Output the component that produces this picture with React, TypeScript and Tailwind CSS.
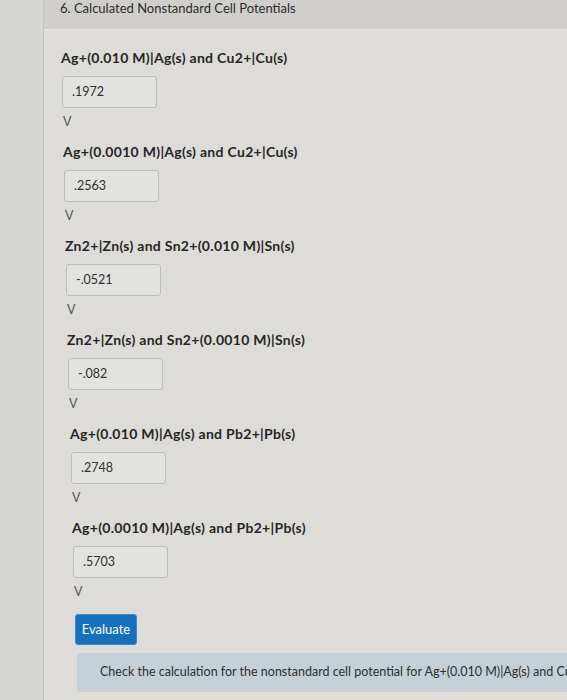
import React from "react";

const items = [
  { label: "Ag+(0.010 M)|Ag(s) and Cu2+|Cu(s)", value: ".1972", ml: "ml-0" },
  { label: "Ag+(0.0010 M)|Ag(s) and Cu2+|Cu(s)", value: ".2563", ml: "ml-[2px]" },
  { label: "Zn2+|Zn(s) and Sn2+(0.010 M)|Sn(s)", value: "-.0521", ml: "ml-[4px]" },
  { label: "Zn2+|Zn(s) and Sn2+(0.0010 M)|Sn(s)", value: "-.082", ml: "ml-[6px]" },
  { label: "Ag+(0.010 M)|Ag(s) and Pb2+|Pb(s)", value: ".2748", ml: "ml-[9px]" },
  { label: "Ag+(0.0010 M)|Ag(s) and Pb2+|Pb(s)", value: ".5703", ml: "ml-[11px]" },
];

export default function App() {
  return (
    <div
      className="w-[567px] h-[700px] overflow-hidden flex bg-[#d9d9d7]"
      style={{ fontFamily: "Lato, 'Open Sans', sans-serif" }}
    >
      <div className="w-[44px] shrink-0 bg-[#d6d6d5] border-r border-[#c4c4c2]" />
      <div className="flex-1 flex flex-col min-w-0">
        <div className="h-[30px] shrink-0 bg-[#d1cfcc] border-b border-[#e4e4e2] pl-[16px] pt-0">
          <div className="text-[13px] leading-[16px] text-[#2b2b2b]">6. Calculated Nonstandard Cell Potentials</div>
        </div>
        <div className="flex-1 bg-[#dddcd8] pl-[17px] pt-[20px] flex flex-col">
          {items.map((it, i) => (
            <div key={i} className={`${it.ml} flex flex-col`}>
              <div className="text-[14px] leading-[16px] font-bold tracking-[0.3px] text-[#262626] whitespace-nowrap">{it.label}</div>
              <div className="mt-[10px] ml-[1px] w-[95px] h-[32px] border border-[#bdbdbb] rounded-[3px] bg-[#e2e2df] flex items-center pl-[9px] text-[12.5px] text-[#2f2f2f]">
                {it.value}
              </div>
              <div className="mt-[6px] ml-[2px] h-[16px] text-[12.5px] leading-[16px] text-[#555]">V</div>
              <div className="h-[14px]" />
            </div>
          ))}
          <div className="ml-[14px]">
            <button className="w-[62px] h-[31px] rounded-[3px] bg-[#1670bc] text-white text-[13px] border border-[#3b8ad0]">
              Evaluate
            </button>
          </div>
          <div className="mt-[8px] ml-[16px] h-[39px] bg-[#c6d1d7] rounded-l-[3px] flex items-center pl-[23px] whitespace-nowrap overflow-hidden text-[12.5px] text-[#2e2e2e]">
            Check the calculation for the nonstandard cell potential for Ag+(0.010 M)|Ag(s) and Cu2
          </div>
        </div>
      </div>
    </div>
  );
}
